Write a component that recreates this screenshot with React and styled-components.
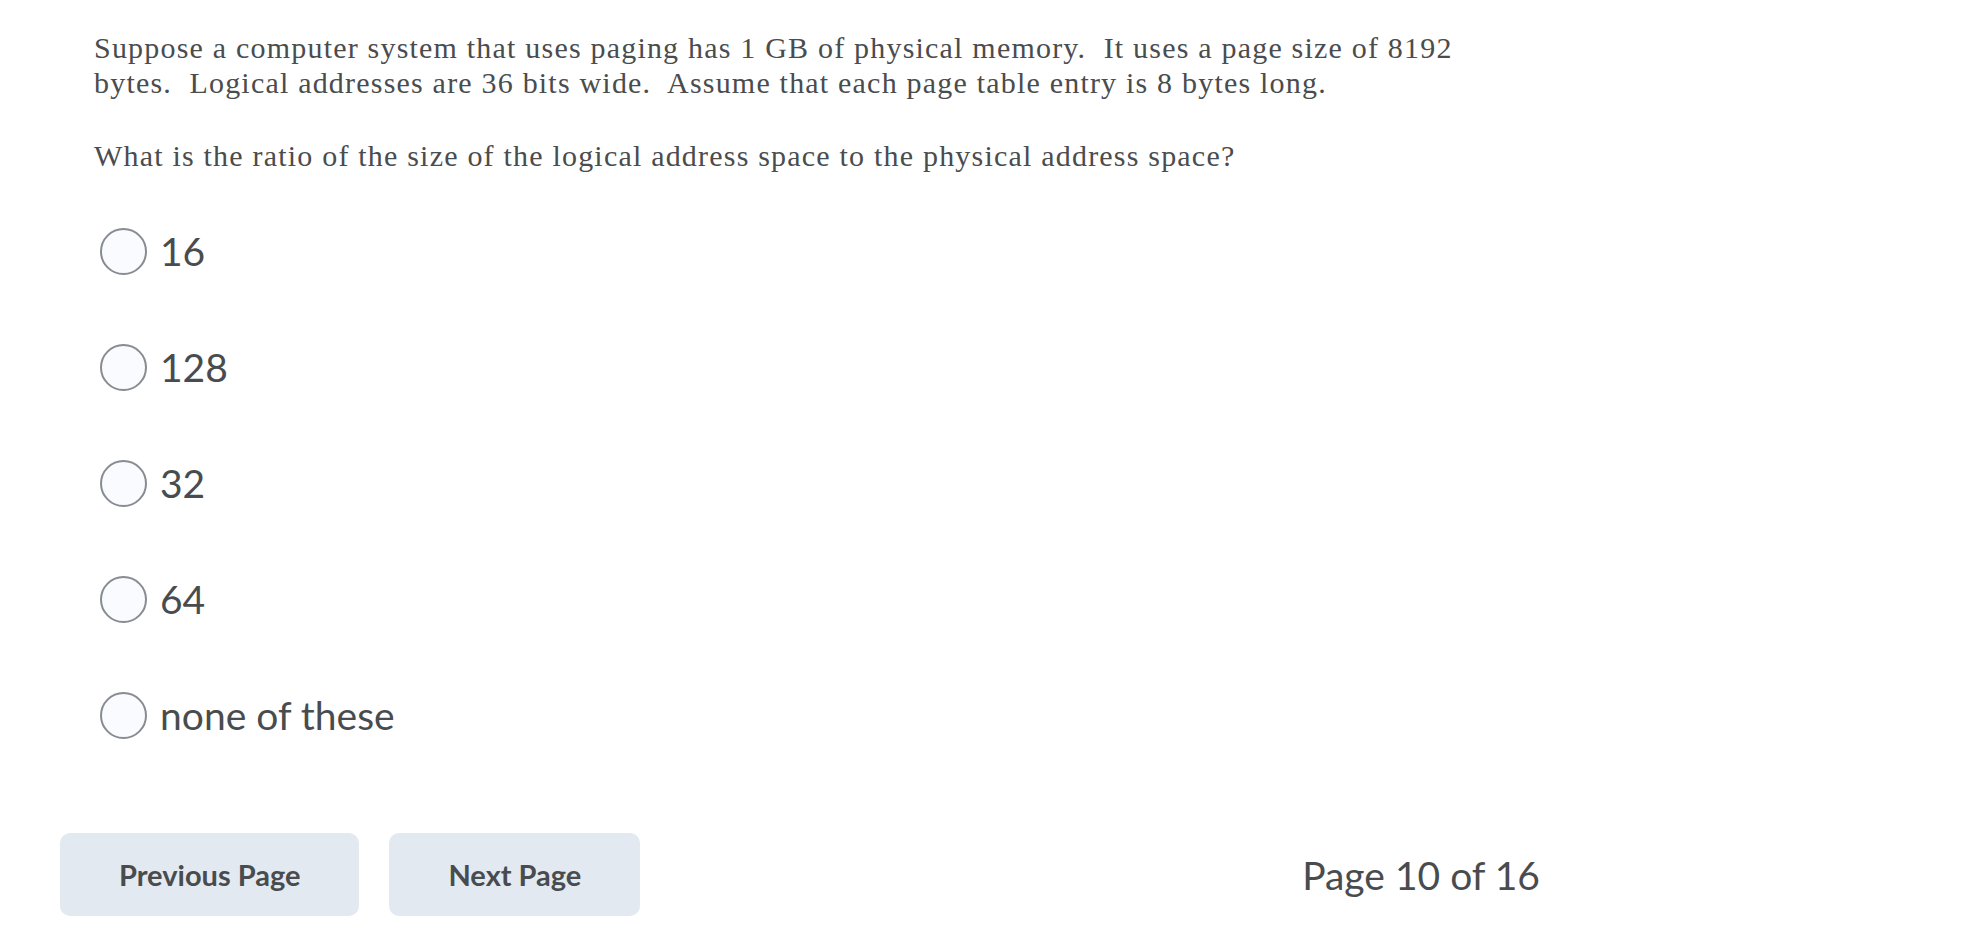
import React from 'react'
import styled, { createGlobalStyle } from 'styled-components'

const GlobalStyle = createGlobalStyle`
   html, body {
      margin: 0;
      padding: 0;
      background: #ffffff;
   }
   body {
      font-family: Lato, "Noto Sans", sans-serif;
      color: #494c4e;
   }
`

const stem =
   'Suppose a computer system that uses paging has 1 GB of physical memory.\u00a0 It uses a page size of 8192 ' +
   'bytes.\u00a0 Logical addresses are 36 bits wide.\u00a0 Assume that each page table entry is 8 bytes long.'

const prompt = 'What is the ratio of the size of the logical address space to the physical address space?'

const options = ['16', '128', '32', '64', 'none of these']

const App = () => {
   return (
      <Page>
         <GlobalStyle />
         <Question>
            <Text>{stem}</Text>
            <Text>{prompt}</Text>
         </Question>
         <Choices>
            {options.map((opt) => (
               <Choice key={opt}>
                  <Radio type="radio" name="answer" />
                  <ChoiceLabel>{opt}</ChoiceLabel>
               </Choice>
            ))}
         </Choices>
         <Footer>
            <Buttons>
               <NavButton>Previous Page</NavButton>
               <NavButton>Next Page</NavButton>
            </Buttons>
            <PageCount>Page 10 of 16</PageCount>
         </Footer>
      </Page>
   )
}

export default App

const Page = styled.main`
   width: 1480px;
   padding: 30px 0 0 60px;
`

const Question = styled.div`
   padding-left: 34px;
   max-width: 1400px;
   font-family: "Liberation Serif", "Times New Roman", serif;
   font-size: 30px;
   letter-spacing: 1.2px;
   line-height: 35px;
   color: #4a4c4e;
`

const Text = styled.p`
   margin: 0 0 38px;
`

const Choices = styled.div`
   display: flex;
   flex-direction: column;
   gap: 69px;
   padding: 17px 0 0 40px;
`

const Choice = styled.label`
   display: flex;
   align-items: center;
   gap: 13px;
   cursor: pointer;
`

const Radio = styled.input`
   appearance: none;
   margin: 0;
   width: 47px;
   height: 47px;
   border: 2px solid #878c90;
   border-radius: 50%;
   background: #f9fbff;
   box-sizing: border-box;
`

const ChoiceLabel = styled.span`
   font-size: 39px;
   line-height: 47px;
   color: #494c4e;
`

const Footer = styled.div`
   display: flex;
   align-items: center;
   justify-content: space-between;
   margin-top: 94px;
`

const Buttons = styled.div`
   display: flex;
   gap: 30px;
`

const NavButton = styled.button`
   height: 83px;
   padding: 0 59px;
   border: none;
   border-radius: 10px;
   background: #e3e9f1;
   font-family: Lato, "Noto Sans", sans-serif;
   font-weight: 700;
   font-size: 29px;
   color: #494c4e;
   cursor: pointer;
`

const PageCount = styled.div`
   font-size: 39px;
   color: #494c4e;
`
